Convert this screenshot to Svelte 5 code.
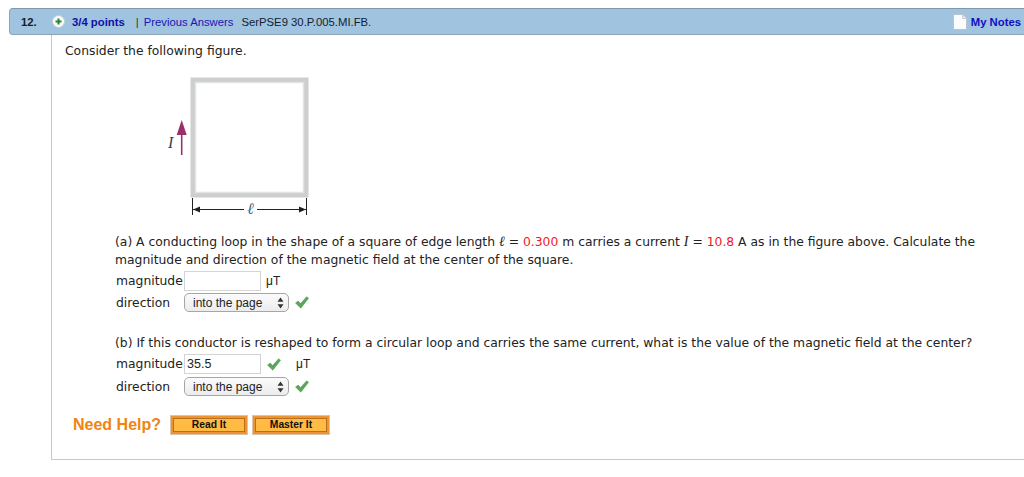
<script lang="ts">
    const parts = [
        { magnitude: "", magnitudeOk: false },
        { magnitude: "35.5", magnitudeOk: true },
    ];
</script>

{#snippet check()}
    <svg class="check" width="14" height="13" viewBox="0 0 14 13">
        <path d="M0.5 7 L3.2 5 L5.6 7.6 L11.6 0.8 L13.6 2.2 L5.8 12.2 Z" fill="#5aa65a" stroke="#4b9a50" stroke-width="0.5" />
    </svg>
{/snippet}

{#snippet directionRow()}
    <div class="row direction">
        <span class="label">direction</span>
        <span class="select">
            <span>into the page</span>
            <svg width="7" height="12" viewBox="0 0 7 12"><path d="M3.5 0.5 L6.5 4.8 L0.5 4.8 Z M3.5 11.5 L6.5 7.2 L0.5 7.2 Z" fill="#333" /></svg>
        </span>
        {@render check()}
    </div>
{/snippet}

<div class="page">
    <header class="bar">
        <b class="num">12.</b>
        <span class="plus">
            <svg width="13" height="13" viewBox="0 0 13 13">
                <circle cx="6.5" cy="6.5" r="6" fill="#fbfbfb" stroke="#c4ccd2" />
                <path d="M6.5 3.5 V9.5 M3.5 6.5 H9.5" stroke="#23863c" stroke-width="2" />
            </svg>
        </span>
        <b class="points">3/4 points</b>
        <span class="sep">|</span>
        <span class="prev">Previous Answers</span>
        <span class="code">SerPSE9 30.P.005.MI.FB.</span>
        <span class="notes">
            <svg width="14" height="16" viewBox="0 0 14 16">
                <path d="M0.5 0.5 H9.5 L13.5 4.5 V15.5 H0.5 Z" fill="#fbfcfd" stroke="#b9c4cc" />
                <path d="M9.5 0.5 V4.5 H13.5" fill="#e4e8ec" stroke="#c6ced4" />
            </svg>
            <b>My Notes</b>
        </span>
    </header>

    <main class="body">
        <p class="intro">Consider the following figure.</p>

        <svg class="figure" width="150" height="142" viewBox="0 0 150 142">
            <rect x="28" y="5" width="113" height="115" fill="#fff" stroke="#cdcecf" stroke-width="5" />
            <rect x="30.5" y="7.5" width="108" height="110" fill="none" stroke="#e2e3e3" stroke-width="1.5" />
            <path d="M16.7 58 V80" stroke="#99306a" stroke-width="1.6" />
            <path d="M16.7 45 L21.7 60 H11.7 Z" fill="#99306a" />
            <text x="3" y="73" class="fig-i">I</text>
            <path d="M27.5 123 V140 M141.5 123 V140" stroke="#222" stroke-width="1" />
            <path d="M28 134.5 H79 M92 134.5 H141" stroke="#222" stroke-width="1" />
            <path d="M28 134.5 L35 131.5 V137.5 Z M141 134.5 L134 131.5 V137.5 Z" fill="#222" />
            <text x="82" y="139" class="fig-l">ℓ</text>
        </svg>

        <section class="part first">
            <p class="line">(a) A conducting loop in the shape of a square of edge length <i class="sym">ℓ</i> = <em>0.300</em> m carries a current <i class="sym">I</i> = <em>10.8</em> A as in the figure above. Calculate the</p>
            <p class="line">magnitude and direction of the magnetic field at the center of the square.</p>
            <div class="row magnitude">
                <span class="label">magnitude</span>
                <span class="input"></span>
                <span class="unit">μT</span>
            </div>
            {@render directionRow()}
        </section>

        <section class="part second">
            <p class="line">(b) If this conductor is reshaped to form a circular loop and carries the same current, what is the value of the magnetic field at the center?</p>
            <div class="row magnitude">
                <span class="label">magnitude</span>
                <span class="input">{parts[1].magnitude}</span>
                {@render check()}
                <span class="unit ok">μT</span>
            </div>
            {@render directionRow()}
        </section>

        <div class="help">
            <b class="need">Need Help?</b>
            <span class="btn"><b>Read It</b></span>
            <span class="btn"><b>Master It</b></span>
        </div>
    </main>
</div>

<style>
    :global(body) {
        margin: 0;
        background: #fff;
    }

    .page {
        width: 1024px;
        height: 477px;
        overflow: hidden;
        padding-top: 8px;
        box-sizing: border-box;
        font-family: "DejaVu Sans", Verdana, sans-serif;
        font-size: 12.35px;
        color: #222;
    }

    .bar {
        display: flex;
        align-items: center;
        height: 27px;
        margin-left: 9px;
        margin-right: -6px;
        padding-left: 11px;
        box-sizing: border-box;
        background: #a0c3df;
        border: 1px solid #8ea4b6;
        border-top-color: #8198aa;
        border-radius: 4px;
        font-family: "Liberation Sans", Arial, sans-serif;
        font-size: 11.3px;
        color: #14202c;
    }

    .num {
        width: 31px;
    }

    .plus {
        display: flex;
        width: 20px;
    }

    .points {
        color: #0f0fa8;
    }

    .sep {
        margin: 0 5px 0 11px;
        color: #333;
    }

    .prev {
        color: #1a16b4;
    }

    .code {
        margin-left: 8px;
    }

    .notes {
        margin-left: auto;
        margin-right: 8px;
        display: flex;
        align-items: center;
        gap: 4px;
        color: #0f0fc0;
    }

    .body {
        height: 425px;
        margin-left: 51px;
        padding: 0 0 0 13px;
        box-sizing: border-box;
        border-left: 1px solid #c8c8c8;
        border-bottom: 1px solid #c8c8c8;
    }

    p {
        margin: 0;
    }

    .intro {
        padding-top: 9px;
        height: 14px;
        line-height: 15px;
    }

    .figure {
        display: block;
        margin: 17px 0 0 100px;
    }

    .fig-i {
        font-family: "Liberation Serif", serif;
        font-style: italic;
        font-size: 16px;
        fill: #3a4250;
    }

    .fig-l {
        font-family: "Liberation Serif", serif;
        font-style: italic;
        font-size: 16px;
        fill: #4a6080;
    }

    .part {
        margin-left: 50px;
    }

    .first {
        margin-top: 15px;
    }

    .second {
        margin-top: 20px;
    }

    .line {
        height: 19px;
        line-height: 19px;
        white-space: nowrap;
    }

    .sym {
        font-family: "Liberation Serif", serif;
        font-size: 14px;
    }

    em {
        font-style: normal;
        color: #f01818;
    }

    .row {
        display: flex;
        align-items: center;
        padding-left: 1px;
    }

    .magnitude {
        height: 21px;
    }

    .second .magnitude {
        height: 22px;
    }

    .direction {
        height: 23px;
    }

    .label {
        width: 68px;
    }

    .input {
        width: 77px;
        height: 20px;
        line-height: 18px;
        padding-left: 2px;
        box-sizing: border-box;
        background: #fff;
        border: 1px solid #d4d4d4;
        font-family: "Liberation Sans", Arial, sans-serif;
        font-size: 12.5px;
    }

    .unit {
        margin-left: 5px;
        font-family: "Liberation Sans", Arial, sans-serif;
        font-size: 12px;
    }

    .unit.ok {
        margin-left: 15px;
    }

    .select {
        display: flex;
        align-items: center;
        justify-content: space-between;
        width: 105px;
        height: 19px;
        padding: 0 4px 0 8px;
        box-sizing: border-box;
        background: linear-gradient(#fbfbfb, #ececec);
        border: 1px solid #a6a6a6;
        border-radius: 5px;
        font-family: "Liberation Sans", Arial, sans-serif;
        font-size: 12px;
    }

    .check {
        margin-left: 6px;
    }

    .help {
        display: flex;
        align-items: center;
        margin: 17px 0 0 8px;
    }

    .need {
        width: 97px;
        font-family: "Liberation Sans", Arial, sans-serif;
        font-size: 16px;
        color: #ef8410;
    }

    .btn {
        display: flex;
        width: 78px;
        height: 20px;
        margin-right: 4px;
        padding: 2px;
        box-sizing: border-box;
        background: #ed9430;
        border: 1px solid #d9c5ad;
    }

    .btn b {
        flex: 1;
        text-align: center;
        line-height: 12px;
        background: #ffbb44;
        border: 1px solid #b8701c;
        font-family: "Liberation Sans", Arial, sans-serif;
        font-size: 10.3px;
        color: #111;
    }
</style>
